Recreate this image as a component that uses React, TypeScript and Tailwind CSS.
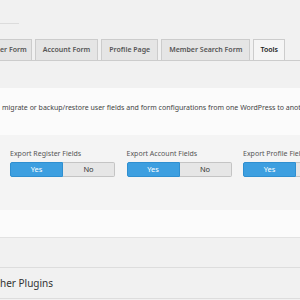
import React from "react"

const tabs = ["er Form", "Account Form", "Profile Page", "Member Search Form"]

const exports = [
  "Export Register Fields",
  "Export Account Fields",
  "Export Profile Fields",
]

const Toggle = () => {
  return (
    <div className="flex h-[15px] w-[105px]">
      <button className="flex-1 rounded-l-[2px] border border-[#2f8fd0] bg-[#3d9fe0] text-[7.5px] text-white leading-none">
        Yes
      </button>
      <button className="flex-1 rounded-r-[2px] border border-l-0 border-[#c4c4c4] bg-[#e6e6e6] text-[7.5px] text-[#333] leading-none">
        No
      </button>
    </div>
  )
}

const App = () => {
  return (
    <div className="w-[300px] h-[300px] overflow-hidden bg-[#f1f1f1] font-['Noto_Sans',sans-serif]">
      <div className="pt-[23px]">
        <div className="h-px w-[19px] bg-[#dcdcdc]" />
      </div>

      {/* tabs */}
      <div className="mt-[15px] flex gap-[3px] border-b border-[#cccccc] whitespace-nowrap">
        {tabs.map((t, i) => (
          <div
            key={t}
            className={
              i === 0
                ? "flex h-[21px] items-center border-t border-r border-[#cccccc] bg-[#e5e5e5] pr-[4px] text-[7px] font-semibold text-[#555]"
                : "flex h-[21px] items-center border-t border-x border-[#cccccc] bg-[#e5e5e5] px-[7px] text-[7px] font-semibold text-[#555]"
            }
          >
            {t}
          </div>
        ))}
        <div className="flex h-[21px] items-center border-t border-x border-[#cccccc] bg-[#f5f5f5] px-[6px] text-[7px] font-semibold text-[#222]">
          Tools
        </div>
      </div>

      {/* tools panel */}
      <div className="mt-[27px] border-b border-[#e2e2e2] bg-[#fbfbfb]">
        <div className="flex h-[47px] items-center pb-[7px] pl-[2px] whitespace-nowrap text-[7px] text-[#444]">
          migrate or backup/restore user fields and form configurations from one WordPress to another
        </div>
        <div className="h-[75px] bg-[#f4f4f4] pt-[14px] pl-[10px]">
          <div className="grid grid-cols-[116.5px_116.5px_116.5px] whitespace-nowrap">
            {exports.map((e) => (
              <div key={e} className="flex flex-col gap-[3px]">
                <span className="text-[7px] leading-[10px] text-[#555]">{e}</span>
                <Toggle />
              </div>
            ))}
          </div>
        </div>
        <div className="h-[27px]" />
      </div>

      {/* other plugins */}
      <div className="mt-[29px] border-y border-[#dddddd] bg-[#f1f1f1]">
        <div className="flex h-[30px] items-center whitespace-nowrap text-[10px] text-[#333]">
          her Plugins
        </div>
      </div>
    </div>
  )
}

export default App
